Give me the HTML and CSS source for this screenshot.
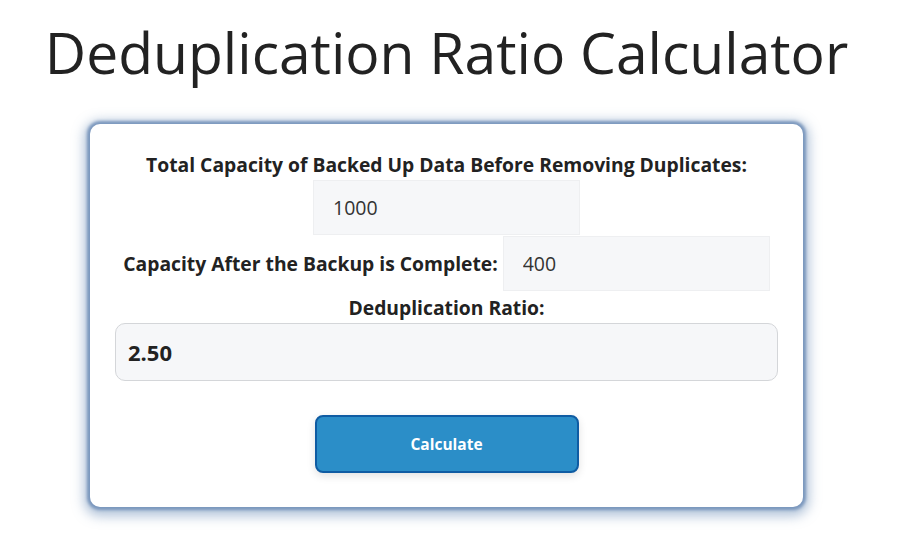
FILE: index.html
```html
<!DOCTYPE html>
<html lang="en">
<head>
<meta charset="utf-8">
<title>Deduplication Ratio Calculator</title>
<link rel="stylesheet" href="styles.css">
</head>
<body>
<div class="page">
  <h1 class="title">Deduplication Ratio Calculator</h1>
  <div class="card">
    <div class="row row-first">
      <label class="field-label" for="before">Total Capacity of Backed Up Data Before Removing Duplicates:</label>
      <input class="field-input" id="before" type="text" value="1000">
    </div>
    <div class="row row-second">
      <label class="field-label" for="after">Capacity After the Backup is Complete:</label>
      <input class="field-input" id="after" type="text" value="400">
    </div>
    <div class="result-label">Deduplication Ratio:</div>
    <div class="result-box">2.50</div>
    <div class="actions">
      <button class="calc-btn" type="button">Calculate</button>
    </div>
  </div>
</div>
</body>
</html>
```

FILE: styles.css
```css
html, body {
  margin: 0;
  padding: 0;
  background: #ffffff;
}

body {
  font-family: "Open Sans", "Noto Sans", "Liberation Sans", sans-serif;
  color: #222222;
}

.page {
  width: 893px;
  padding-bottom: 40px;
  display: flex;
  flex-direction: column;
  align-items: center;
}

.title {
  margin: 12px 0 0;
  font-size: 57px;
  font-weight: 400;
  line-height: 80px;
  color: #222222;
}

.card {
  box-sizing: border-box;
  width: 713px;
  margin-top: 32px;
  padding: 29px 25px 34px;
  background: #ffffff;
  border-radius: 10px;
  box-shadow: 0 0 3px 3px rgba(115, 145, 185, 0.9), 0 3px 12px 6px rgba(100, 135, 180, 0.5);
  display: flex;
  flex-direction: column;
  align-items: stretch;
}

.row {
  display: flex;
  flex-wrap: wrap;
  justify-content: center;
  align-items: center;
  column-gap: 5px;
}

.row-first {
  row-gap: 3px;
}

.row-second {
  margin-top: 1px;
}

.field-label {
  font-size: 19.3px;
  font-weight: 700;
  line-height: 24px;
  color: #222222;
}

.field-input {
  box-sizing: border-box;
  width: 267px;
  height: 55px;
  padding: 0 19px;
  border: 1px solid #eeeff1;
  background: #f6f7f9;
  font-family: inherit;
  font-size: 19.5px;
  color: #333333;
  outline: none;
}

.result-label {
  margin-top: 5px;
  text-align: center;
  font-size: 19.3px;
  font-weight: 700;
  line-height: 24px;
}

.result-box {
  box-sizing: border-box;
  margin-top: 3px;
  height: 58px;
  padding: 0 12px;
  border: 1px solid #d4d6d9;
  border-radius: 10px;
  background: #f6f7f9;
  display: flex;
  align-items: center;
  font-size: 22px;
  font-weight: 700;
  color: #222222;
}

.actions {
  display: flex;
  justify-content: center;
  margin-top: 34px;
}

.calc-btn {
  box-sizing: border-box;
  width: 264px;
  height: 58px;
  border: 2px solid #0f5ca3;
  border-radius: 8px;
  background: #2b8ec8;
  color: #ffffff;
  font-family: inherit;
  font-size: 15.5px;
  font-weight: 700;
  box-shadow: 0 3px 8px rgba(0, 0, 0, 0.12);
  cursor: pointer;
}
```
